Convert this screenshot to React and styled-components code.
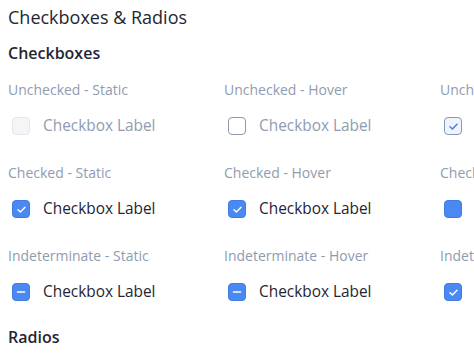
import styled, { createGlobalStyle, css } from 'styled-components';

const GlobalStyle = createGlobalStyle`
  html, body { margin: 0; padding: 0; background: #fff; }
  body { font-family: "Open Sans", "Noto Sans", sans-serif; color: #1f2633; }
`;

const blue = '#4a88f2';

const Page = styled.div`
  padding: 4px 8px 0;
  width: 474px;
  box-sizing: border-box;
  overflow: hidden;
`;

const Title = styled.h1`
  margin: 0;
  font-size: 18px;
  font-weight: 500;
  line-height: 26px;
  color: #1f2633;
`;

const SubTitle = styled.h2`
  margin: ${(p) => p.$top || 11}px 0 0;
  font-size: 16px;
  font-weight: 600;
  line-height: 24px;
  color: #1f2633;
`;

const Grid = styled.div`
  display: grid;
  grid-template-columns: repeat(3, 216px);
  row-gap: 25px;
  margin-top: 15px;
`;

const Cell = styled.div`
  display: flex;
  flex-direction: column;
  gap: 14px;
  white-space: nowrap;
`;

const Caption = styled.div`
  font-size: 14px;
  line-height: 20px;
  color: #8f9bb0;
`;

const Row = styled.label`
  display: flex;
  align-items: center;
  gap: 13px;
  padding-left: 4px;
  height: 24px;
`;

const Box = styled.span`
  width: 18px;
  height: 18px;
  box-sizing: border-box;
  border-radius: 4px;
  display: flex;
  align-items: center;
  justify-content: center;
  flex-shrink: 0;
  ${(p) => p.$variant === 'disabled' && css`
    background: #f4f5f7;
    border: 1px solid #e3e6eb;
  `}
  ${(p) => p.$variant === 'empty' && css`
    background: #fff;
    border: 1.5px solid #8c98ac;
  `}
  ${(p) => p.$variant === 'soft' && css`
    background: #eef3fd;
    border: 1.5px solid #8797b6;
  `}
  ${(p) => p.$variant === 'filled' && css`
    background: ${blue};
    border: 1px solid #3f7de6;
  `}
`;

const Text = styled.span`
  font-size: 15.4px;
  line-height: 20px;
  color: ${(p) => (p.$muted ? '#8f9bb0' : '#1f2633')};
`;

const Check = ({ color }) => (
  <svg width="11" height="9" viewBox="0 0 11 9" fill="none">
    <path d="M2 4.7L4.4 7L9 2.2" stroke={color} strokeWidth="1.5" strokeLinecap="round" strokeLinejoin="round" />
  </svg>
);

const Dash = () => (
  <svg width="10" height="4" viewBox="0 0 10 4" fill="none">
    <path d="M1.5 2H8.5" stroke="#fff" strokeWidth="1.6" strokeLinecap="round" />
  </svg>
);

const items = [
  { caption: 'Unchecked - Static', variant: 'disabled', mark: null, muted: true },
  { caption: 'Unchecked - Hover', variant: 'empty', mark: null, muted: true },
  { caption: 'Unchecked - Focus', variant: 'soft', mark: 'softcheck', muted: true },
  { caption: 'Checked - Static', variant: 'filled', mark: 'check' },
  { caption: 'Checked - Hover', variant: 'filled', mark: 'check' },
  { caption: 'Checked - Focus', variant: 'filled', mark: null },
  { caption: 'Indeterminate - Static', variant: 'filled', mark: 'dash' },
  { caption: 'Indeterminate - Hover', variant: 'filled', mark: 'dash' },
  { caption: 'Indeterminate - Focus', variant: 'filled', mark: 'check' },
];

function Mark({ kind }) {
  if (kind === 'check') return <Check color="#fff" />;
  if (kind === 'softcheck') return <Check color="#4a7fd8" />;
  if (kind === 'dash') return <Dash />;
  return null;
}

export default function App() {
  return (
    <Page>
      <GlobalStyle />
      <Title>Checkboxes &amp; Radios</Title>
      <SubTitle>Checkboxes</SubTitle>
      <Grid>
        {items.map((item) => (
          <Cell key={item.caption}>
            <Caption>{item.caption}</Caption>
            <Row>
              <Box $variant={item.variant}>
                <Mark kind={item.mark} />
              </Box>
              <Text $muted={item.muted}>Checkbox Label</Text>
            </Row>
          </Cell>
        ))}
      </Grid>
      <SubTitle $top={21}>Radios</SubTitle>
    </Page>
  );
}
